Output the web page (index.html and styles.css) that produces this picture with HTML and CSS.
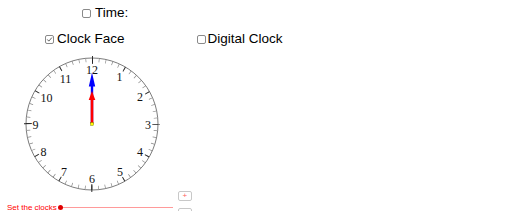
FILE: index.html
```html
<!DOCTYPE html>
<html lang="en">
<head>
  <meta charset="UTF-8" />
  <title>Clock</title>
  <link rel="stylesheet" href="styles.css">
</head>
<body>
  <div class="applet">
    <div class="row row-top">
      <label class="check"><span class="box"></span>Time:</label>
    </div>

    <div class="row row-opts">
      <label class="check face"><span class="box on">
        <svg viewBox="0 0 9 9"><path d="M1.6 4.4 L3.6 6.6 L7.6 2" fill="none" stroke="#333" stroke-width="1"/></svg>
      </span>Clock Face</label>
      <label class="check digital"><span class="box"></span>Digital Clock</label>
    </div>

    <svg class="clock" width="140" height="140" viewBox="0 0 140 140">
      <circle cx="70" cy="70" r="66" fill="none" stroke="#444" stroke-width="0.7"/>
      <!-- minute ticks -->
      <circle cx="70" cy="70" r="64" fill="none" stroke="#888" stroke-width="4"
              stroke-dasharray="0.7 6.002" stroke-dashoffset="0.35"/>
      <!-- hour ticks -->
      <circle cx="70" cy="70" r="63.5" fill="none" stroke="#333" stroke-width="5"
              stroke-dasharray="0.9 32.35" stroke-dashoffset="0.45"/>
      <!-- quarter ticks -->
      <circle cx="70" cy="70" r="64" fill="none" stroke="#222" stroke-width="8"
              stroke-dasharray="0.9 99.63" stroke-dashoffset="0.45"/>

      <g class="nums">
        <text x="70" y="15.5">12</text>
        <text x="97.5" y="23">1</text>
        <text x="118" y="43">2</text>
        <text x="126" y="70.5">3</text>
        <text x="118" y="97.5">4</text>
        <text x="98" y="117.6">5</text>
        <text x="70" y="125">6</text>
        <text x="42" y="117.6">7</text>
        <text x="21.5" y="97.5">8</text>
        <text x="13.5" y="70.5">9</text>
        <text x="24.5" y="44">10</text>
        <text x="43.5" y="24.5">11</text>
      </g>

      <!-- minute hand -->
      <line x1="70" y1="70" x2="70" y2="31" stroke="#0000ff" stroke-width="2.4"/>
      <polygon points="70,18.5 73.2,32.5 66.8,32.5" fill="#0000ff"/>
      <!-- hour hand -->
      <line x1="70" y1="70" x2="70" y2="44" stroke="#ff0000" stroke-width="2.6"/>
      <polygon points="70,37 73.3,46 66.7,46" fill="#ff0000"/>

      <rect x="68.5" y="68.5" width="3" height="3" fill="#ffff00" stroke="#666600" stroke-width="0.4"/>
    </svg>

    <div class="row row-slider">
      <div class="slider">
        <span class="slider-label">Set the clocks</span>
        <span class="knob"></span>
        <span class="track"></span>
      </div>
      <div class="steps">
        <button class="step">+</button>
        <button class="step">&minus;</button>
      </div>
    </div>
  </div>
</body>
</html>
```

FILE: styles.css
```css
* { margin: 0; padding: 0; box-sizing: border-box; }
body { font-family: 'Liberation Sans', Arial, sans-serif; background: #fff; color: #000; overflow: hidden; }

.applet { width: 512px; height: 211px; }

.row { display: flex; align-items: center; }
.row-top { height: 26px; padding-left: 82px; }
.row-opts { height: 26px; padding-left: 45px; }

.check {
  display: flex;
  align-items: center;
  font-size: 13.5px;
  line-height: 1;
}
.box {
  width: 9px; height: 9px;
  border: 1px solid #8a8a8a;
  border-radius: 2px;
  margin-right: 4px;
  display: inline-block;
  background: #fff;
}
.box svg { display: block; width: 7px; height: 7px; }
.face .box { margin-right: 3px; }
.digital { margin-left: 72px; }
.digital .box { margin-right: 2px; }

/* Clock */
.clock { display: block; margin: 2px 0 0 22px; }
.nums text {
  font-family: 'Liberation Serif', 'Times New Roman', serif;
  font-size: 12px;
  fill: #111;
  text-anchor: middle;
  dominant-baseline: central;
}

/* Slider */
.row-slider { align-items: flex-start; height: 21px; margin-top: -3px; }
.slider {
  display: flex;
  align-items: center;
  margin-top: 12px;
  padding-left: 7px;
}
.slider-label { color: #ff0000; font-size: 8px; line-height: 9px; margin-right: 1px; }
.knob {
  width: 5px; height: 5px;
  border-radius: 50%;
  background: #e00000;
}
.track {
  width: 110px; height: 1px;
  background: #ff9a9a;
}
.steps {
  display: flex;
  flex-direction: column;
  gap: 7px;
  margin-left: 5px;
  overflow: hidden;
}
.step {
  width: 14px; height: 10px;
  border: 1px solid #c8c8c8;
  border-radius: 2px;
  background: #fff;
  color: #ff6060;
  font-size: 8px;
  line-height: 8px;
  font-family: 'Liberation Sans', Arial, sans-serif;
}
```
